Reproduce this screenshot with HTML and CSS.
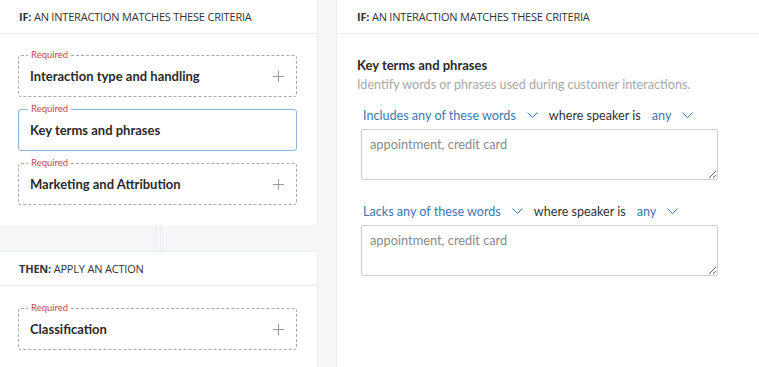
FILE: index.html
```html
<!DOCTYPE html>
<html>
<head>
<meta charset="utf-8">
<link rel="stylesheet" href="styles.css">
</head>
<body>
<div class="page">
  <div class="left">
    <section class="panel panel-if">
      <div class="panel-head"><b>IF:</b> AN INTERACTION MATCHES THESE CRITERIA</div>
      <div class="panel-body">
        <div class="crit dashed">
          <span class="req">Required</span>
          <span class="crit-title">Interaction type and handling</span>
          <svg class="plus" width="11" height="11" viewBox="0 0 11 11"><path d="M5.5 0v11M0 5.5h11" stroke="#9b9b9b" stroke-width="1"/></svg>
        </div>
        <div class="crit active">
          <span class="req">Required</span>
          <span class="crit-title">Key terms and phrases</span>
        </div>
        <div class="crit dashed">
          <span class="req">Required</span>
          <span class="crit-title">Marketing and Attribution</span>
          <svg class="plus" width="11" height="11" viewBox="0 0 11 11"><path d="M5.5 0v11M0 5.5h11" stroke="#9b9b9b" stroke-width="1"/></svg>
        </div>
      </div>
    </section>
    <div class="connector"><div class="connector-line"></div></div>
    <section class="panel panel-then">
      <div class="panel-head"><b>THEN:</b> APPLY AN ACTION</div>
      <div class="panel-body then-body">
        <div class="crit dashed">
          <span class="req">Required</span>
          <span class="crit-title">Classification</span>
          <svg class="plus" width="11" height="11" viewBox="0 0 11 11"><path d="M5.5 0v11M0 5.5h11" stroke="#9b9b9b" stroke-width="1"/></svg>
        </div>
      </div>
    </section>
  </div>
  <section class="right">
    <div class="panel-head right-head"><b>IF:</b> AN INTERACTION MATCHES THESE CRITERIA</div>
    <div class="right-body">
      <h3 class="sec-title">Key terms and phrases</h3>
      <p class="sec-desc">Identify words or phrases used during customer interactions.</p>
      <div class="rule">
        <div class="rule-line">
          <span class="dd">Includes any of these words <svg class="chev" width="11" height="6" viewBox="0 0 11 6"><path d="M0.5 0.5l5 5 5-5" fill="none" stroke="#3b78b6" stroke-width="1"/></svg></span>
          <span class="txt">where speaker is</span>
          <span class="dd">any <svg class="chev" width="11" height="6" viewBox="0 0 11 6"><path d="M0.5 0.5l5 5 5-5" fill="none" stroke="#3b78b6" stroke-width="1"/></svg></span>
        </div>
        <textarea class="ta" placeholder="appointment, credit card"></textarea>
      </div>
      <div class="rule second">
        <div class="rule-line">
          <span class="dd">Lacks any of these words <svg class="chev" width="11" height="6" viewBox="0 0 11 6"><path d="M0.5 0.5l5 5 5-5" fill="none" stroke="#3b78b6" stroke-width="1"/></svg></span>
          <span class="txt">where speaker is</span>
          <span class="dd">any <svg class="chev" width="11" height="6" viewBox="0 0 11 6"><path d="M0.5 0.5l5 5 5-5" fill="none" stroke="#3b78b6" stroke-width="1"/></svg></span>
        </div>
        <textarea class="ta" placeholder="appointment, credit card"></textarea>
      </div>
    </div>
  </section>
</div>
</body>
</html>
```
FILE: styles.css
```css
html, body {
  margin: 0;
  padding: 0;
  background: #f5f6f8;
}
body {
  font-family: Lato, "Liberation Sans", sans-serif;
  color: #2b2b2b;
  width: 759px;
  height: 367px;
  overflow: hidden;
}
.page {
  display: flex;
  height: 367px;
}
.left {
  width: 318px;
  display: flex;
  flex-direction: column;
}
.panel {
  background: #fff;
  border-right: 1px solid #eceef1;
}
.panel-head {
  height: 34px;
  box-sizing: border-box;
  line-height: 33px;
  padding-left: 19px;
  font-family: "Open Sans", "Liberation Sans", sans-serif;
  font-size: 11px;
  letter-spacing: -0.2px;
  color: #333;
  border-bottom: 1px solid #e9ebee;
}
.panel-head b {
  font-weight: 700;
}
.panel-body {
  padding: 21px 20px 0 18px;
  display: flex;
  flex-direction: column;
  gap: 12px;
}
.then-body {
  padding-top: 22px;
}
.panel-if {
  height: 225px;
  box-sizing: border-box;
}
.connector {
  height: 27px;
  display: flex;
  justify-content: center;
  border-bottom: 1px solid #eceef1;
  box-sizing: border-box;
}
.connector-line {
  width: 4px;
  margin-left: -3px;
  border-left: 1px solid #e8eaed;
  border-right: 1px solid #e8eaed;
}
.panel-then {
  flex: 1;
}
.crit {
  position: relative;
  height: 42px;
  box-sizing: border-box;
  padding: 0 12px 0 11px;
  border-radius: 3px;
  display: flex;
  align-items: center;
  justify-content: space-between;
}
.req {
  position: absolute;
  top: -7px;
  left: 9px;
  padding: 0 3px;
  background: #fff;
  font-size: 9.5px;
  line-height: 12px;
  color: #c1494a;
}
.crit.dashed {
  border: 1px dashed #a9a9a9;
}
.crit.active {
  border: 1px solid #8fb4d6;
}
.crit-title {
  font-size: 13px;
  font-weight: 700;
  color: #2a2a2a;
}
.plus {
  display: block;
}
.right {
  margin-left: 18px;
  flex: 1;
  background: #fff;
  border-left: 1px solid #eceef1;
}
.right-head {
  padding-left: 20px;
}
.right-body {
  padding: 22px 0 0 20px;
}
.sec-title {
  margin: 0;
  font-size: 13px;
  line-height: 18px;
  font-weight: 700;
  color: #2a2a2a;
}
.sec-desc {
  margin: 2px 0 0;
  font-size: 12.6px;
  line-height: 18px;
  color: #a8a8a8;
}
.rule {
  margin-top: 10px;
}
.rule.second {
  margin-top: 20px;
}
.rule-line {
  display: flex;
  align-items: center;
  gap: 11px;
  padding-left: 6px;
  font-size: 12.6px;
  height: 22px;
}
.dd {
  color: #3b78b6;
  display: flex;
  align-items: center;
  gap: 11px;
}
.chev {
  display: block;
}
.txt {
  color: #333;
}
.ta {
  display: block;
  margin: 3px 0 0 4px;
  width: 357px;
  height: 51px;
  box-sizing: border-box;
  border: 1px solid #cfcfcf;
  border-radius: 2px;
  padding: 6px 8px;
  font-family: Lato, "Liberation Sans", sans-serif;
  font-size: 12.8px;
  color: #333;
}
.ta::placeholder {
  color: #8a8a8a;
}
```
